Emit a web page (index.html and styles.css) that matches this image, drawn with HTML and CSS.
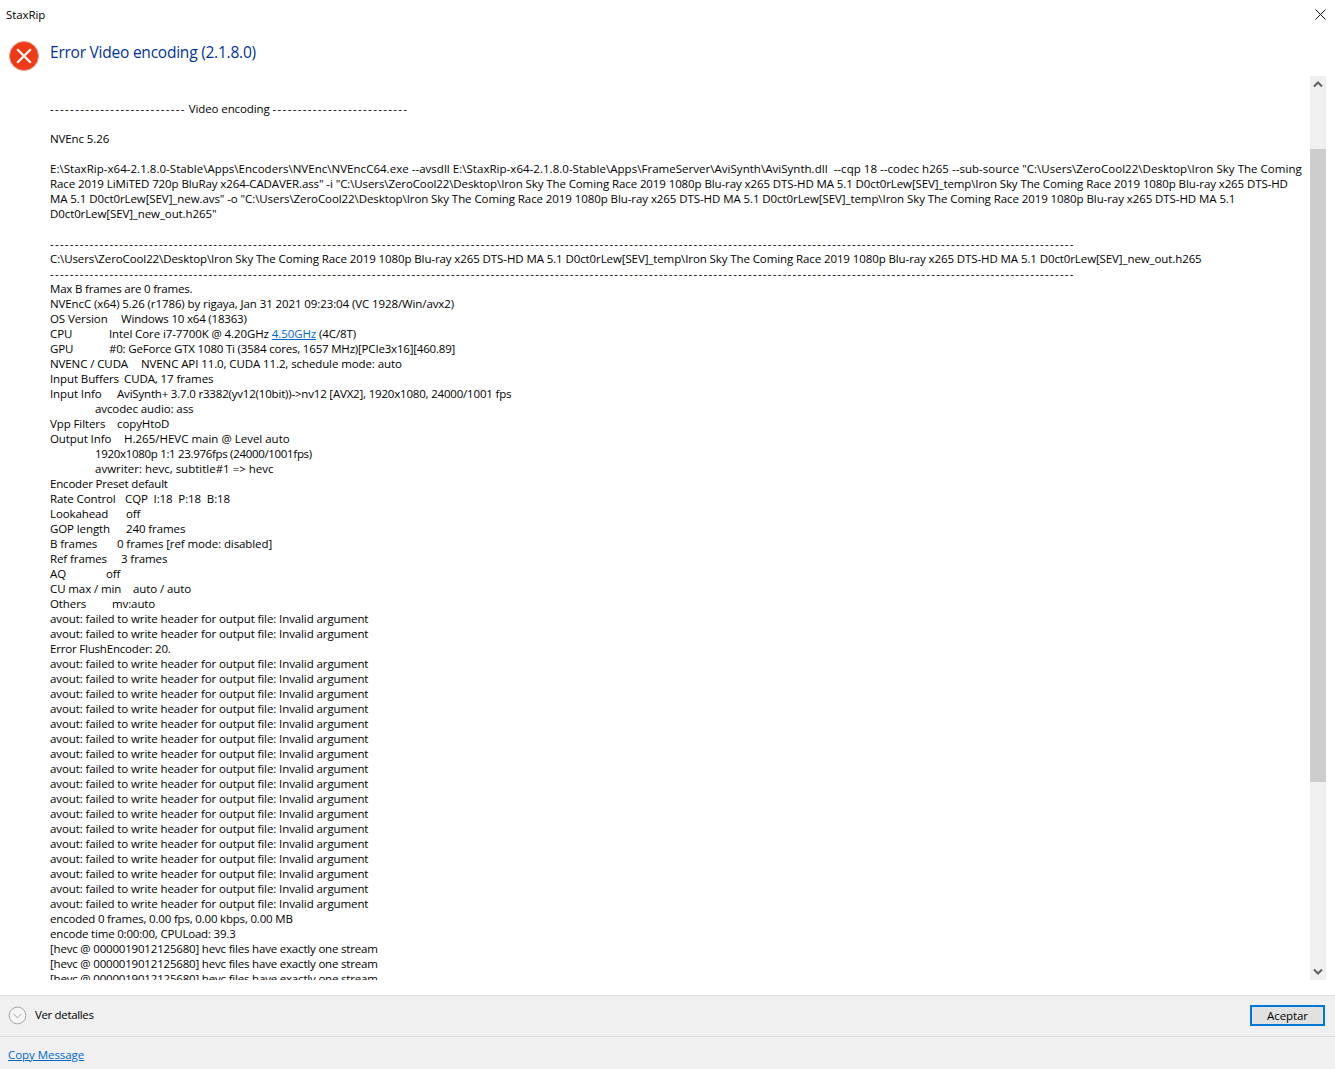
FILE: index.html
```html
<!DOCTYPE html>
<html lang="en">
<head>
  <meta charset="UTF-8" />
  <title>StaxRip</title>
  <link rel="stylesheet" href="styles.css">
</head>
<body>
  <div class="dialog">

    <div class="title-bar">
      <span>StaxRip</span>
      <svg class="close-icon" viewBox="0 0 11 11"><path d="M.5.5l10 10M10.5.5l-10 10" /></svg>
    </div>

    <div class="heading">
      <svg class="error-icon" viewBox="0 0 30 30">
        <circle cx="15" cy="15" r="14.5" fill="#f03a17" stroke="#e0a08c" stroke-width="1" />
        <path d="M8.2 8.2l13.6 13.6M21.8 8.2L8.2 21.8" stroke="#fff" stroke-width="2.2" />
      </svg>
      <h1>Error Video encoding (2.1.8.0)</h1>
    </div>

    <div class="content">
      <div class="log"><span class="dash-short">---------------------------</span> Video encoding <span class="dash-short">---------------------------</span>

NVEnc 5.26

<span class="cmd-1">E:\StaxRip-x64-2.1.8.0-Stable\Apps\Encoders\NVEnc\NVEncC64.exe --avsdll E:\StaxRip-x64-2.1.8.0-Stable\Apps\FrameServer\AviSynth\AviSynth.dll  --cqp 18 --codec h265 --sub-source "C:\Users\ZeroCool22\Desktop\Iron Sky The Coming</span>
Race 2019 LiMiTED 720p BluRay x264-CADAVER.ass" -i "C:\Users\ZeroCool22\Desktop\Iron Sky The Coming Race 2019 1080p Blu-ray x265 DTS-HD MA 5.1 D0ct0rLew[SEV]_temp\Iron Sky The Coming Race 2019 1080p Blu-ray x265 DTS-HD
<span class="cmd-3">MA 5.1 D0ct0rLew[SEV]_new.avs" -o "C:\Users\ZeroCool22\Desktop\Iron Sky The Coming Race 2019 1080p Blu-ray x265 DTS-HD MA 5.1 D0ct0rLew[SEV]_temp\Iron Sky The Coming Race 2019 1080p Blu-ray x265 DTS-HD MA 5.1</span>
D0ct0rLew[SEV]_new_out.h265"

<span class="dash">---------------------------------------------------------------------------------------------------------------------------------------------------------------------------------------------------------------</span>
C:\Users\ZeroCool22\Desktop\Iron Sky The Coming Race 2019 1080p Blu-ray x265 DTS-HD MA 5.1 D0ct0rLew[SEV]_temp\Iron Sky The Coming Race 2019 1080p Blu-ray x265 DTS-HD MA 5.1 D0ct0rLew[SEV]_new_out.h265
<span class="dash">---------------------------------------------------------------------------------------------------------------------------------------------------------------------------------------------------------------</span>
<span class="tight">Max B frames are 0 frames.</span>
NVEncC (x64) 5.26 (r1786) by rigaya, Jan 31 2021 09:23:04 (VC 1928/Win/avx2)
<span class="key k71">OS Version</span><span class="tight">Windows 10 x64 (18363)</span>
<span class="key k59">CPU</span>Intel Core i7-7700K @ 4.20GHz <a href="#">4.50GHz</a> (4C/8T)
<span class="key k59">GPU</span><span class="tight">#0: GeForce GTX 1080 Ti (3584 cores, 1657 MHz)[PCIe3x16][460.89]</span>
<span class="key k91">NVENC / CUDA</span>NVENC API 11.0, CUDA 11.2, schedule mode: auto
<span class="key k74">Input Buffers</span>CUDA, 17 frames
<span class="key k67">Input Info</span><span class="tight">AviSynth+ 3.7.0 r3382(yv12(10bit))-&gt;nv12 [AVX2], 1920x1080, 24000/1001 fps</span>
<span class="key k45"></span>avcodec audio: ass
<span class="key k67">Vpp Filters</span>copyHtoD
<span class="key k74">Output Info</span><span class="loose">H.265/HEVC main @ Level auto</span>
<span class="key k45"></span><span class="tighter">1920x1080p 1:1 23.976fps (24000/1001fps)</span>
<span class="key k45"></span><span class="loose">avwriter: hevc, subtitle#1 =&gt; hevc</span>
<span class="tight">Encoder Preset default</span>
<span class="key k75">Rate Control</span>CQP  I:18  P:18  B:18
<span class="key k76">Lookahead</span>off
<span class="key k76">GOP length</span>240 frames
<span class="key k67">B frames</span>0 frames [ref mode: disabled]
<span class="key k71">Ref frames</span>3 frames
<span class="key k56">AQ</span>off
<span class="key k83">CU max / min</span>auto / auto
<span class="key k62">Others</span>mv:auto
avout: failed to write header for output file: Invalid argument
avout: failed to write header for output file: Invalid argument
<span class="tight">Error FlushEncoder: 20.</span>
avout: failed to write header for output file: Invalid argument
avout: failed to write header for output file: Invalid argument
avout: failed to write header for output file: Invalid argument
avout: failed to write header for output file: Invalid argument
avout: failed to write header for output file: Invalid argument
avout: failed to write header for output file: Invalid argument
avout: failed to write header for output file: Invalid argument
avout: failed to write header for output file: Invalid argument
avout: failed to write header for output file: Invalid argument
avout: failed to write header for output file: Invalid argument
avout: failed to write header for output file: Invalid argument
avout: failed to write header for output file: Invalid argument
avout: failed to write header for output file: Invalid argument
avout: failed to write header for output file: Invalid argument
avout: failed to write header for output file: Invalid argument
avout: failed to write header for output file: Invalid argument
avout: failed to write header for output file: Invalid argument
<span class="tight">encoded 0 frames, 0.00 fps, 0.00 kbps, 0.00 MB</span>
<span class="tight">encode time 0:00:00, CPULoad: 39.3</span>
<span class="tight">[hevc @ 0000019012125680] hevc files have exactly one stream</span>
<span class="tight">[hevc @ 0000019012125680] hevc files have exactly one stream</span>
<span class="tight">[hevc @ 0000019012125680] hevc files have exactly one stream</span></div>

      <div class="scrollbar">
        <svg class="arrow" viewBox="0 0 16 17"><path d="M4 10.5l4-4 4 4" /></svg>
        <div class="track"><div class="thumb"></div></div>
        <svg class="arrow" viewBox="0 0 16 17"><path d="M4 6.5l4 4 4-4" /></svg>
      </div>
    </div>

    <div class="actions">
      <svg class="expand-icon" viewBox="0 0 20 20">
        <circle cx="10" cy="10" r="8.8" />
        <path d="M5.8 8.2L10 12.4l4.2-4.2" />
      </svg>
      <span class="details">Ver detalles</span>
      <button class="ok-button">Aceptar</button>
    </div>

    <div class="footer">
      <a href="#">Copy Message</a>
    </div>

  </div>
</body>
</html>
```

FILE: styles.css
```css
* {
  margin: 0;
  padding: 0;
  box-sizing: border-box;
}

html, body {
  height: 100%;
  background: #fff;
  font: 400 11.5px/15px "Open Sans", "Noto Sans", sans-serif;
  letter-spacing: -0.1px;
  color: #000;
  overflow: hidden;
}

a {
  color: #0066cc;
}

.dialog {
  display: flex;
  flex-direction: column;
  height: 100%;
}

/* -------- title bar -------------------------------------------- */
.title-bar {
  display: flex;
  justify-content: space-between;
  align-items: center;
  height: 29px;
  padding: 0 9px 0 6px;
}

.close-icon {
  width: 11px;
  height: 11px;
  fill: none;
  stroke: #111;
  stroke-width: 1;
}

/* -------- heading ---------------------------------------------- */
.heading {
  display: flex;
  align-items: flex-start;
  gap: 11px;
  height: 47px;
  padding: 12px 0 0 9px;
}

.error-icon {
  width: 30px;
  height: 30px;
}

.heading h1 {
  font-size: 15.5px;
  font-weight: 400;
  line-height: 22px;
  letter-spacing: -0.23px;
  color: #003399;
}

/* -------- log -------------------------------------------------- */
.content {
  display: flex;
  flex: 1;
  min-height: 0;
  padding-right: 9px;
}

.log {
  flex: 1;
  height: 904px;
  padding: 25px 0 0 50px;
  overflow: hidden;
  white-space: pre;
}

.dash {
  letter-spacing: 1.25px;
}

.dash-short {
  letter-spacing: 1.33px;
}

.cmd-1 {
  letter-spacing: 0.03px;
}

.cmd-3 {
  letter-spacing: -0.08px;
}

.tight {
  letter-spacing: -0.19px;
}

.tighter {
  letter-spacing: -0.32px;
}

.loose {
  letter-spacing: 0;
}

.key {
  display: inline-block;
}

.k45 { width: 45px; }
.k56 { width: 56px; }
.k59 { width: 59px; }
.k62 { width: 62px; }
.k67 { width: 67px; }
.k71 { width: 71px; }
.k74 { width: 74px; }
.k75 { width: 75px; }
.k76 { width: 76px; }
.k83 { width: 83px; }
.k91 { width: 91px; }

/* -------- scrollbar -------------------------------------------- */
.scrollbar {
  display: flex;
  flex-direction: column;
  width: 16px;
  height: 904px;
  background: #f0f0f0;
}

.arrow {
  width: 16px;
  height: 17px;
  flex: none;
  fill: none;
  stroke: #606060;
  stroke-width: 2;
}

.track {
  flex: 1;
  padding-top: 56px;
}

.thumb {
  height: 633px;
  background: #cdcdcd;
}

/* -------- bottom strips ---------------------------------------- */
.actions {
  display: flex;
  flex: none;
  align-items: center;
  height: 42px;
  padding: 0 10px 1px 8px;
  background: #f0f0f0;
  border-top: 1px solid #dfdfdf;
  border-bottom: 1px solid #dfdfdf;
}

.expand-icon {
  width: 19px;
  height: 19px;
  margin-bottom: 1px;
  fill: #f6f6f6;
  stroke: #a0a0a0;
  stroke-width: 1;
}

.details {
  margin: 0 0 2px 8px;
  letter-spacing: -0.35px;
}

.ok-button {
  width: 75px;
  height: 21px;
  margin-left: auto;
  border: 2px solid #0078d7;
  background: #e1e1e1;
  font: inherit;
  letter-spacing: inherit;
  color: #000;
}

.footer {
  flex: none;
  display: flex;
  align-items: center;
  height: 32px;
  padding: 2px 0 0 8px;
  background: #f0f0f0;
  letter-spacing: -0.05px;
}
```
